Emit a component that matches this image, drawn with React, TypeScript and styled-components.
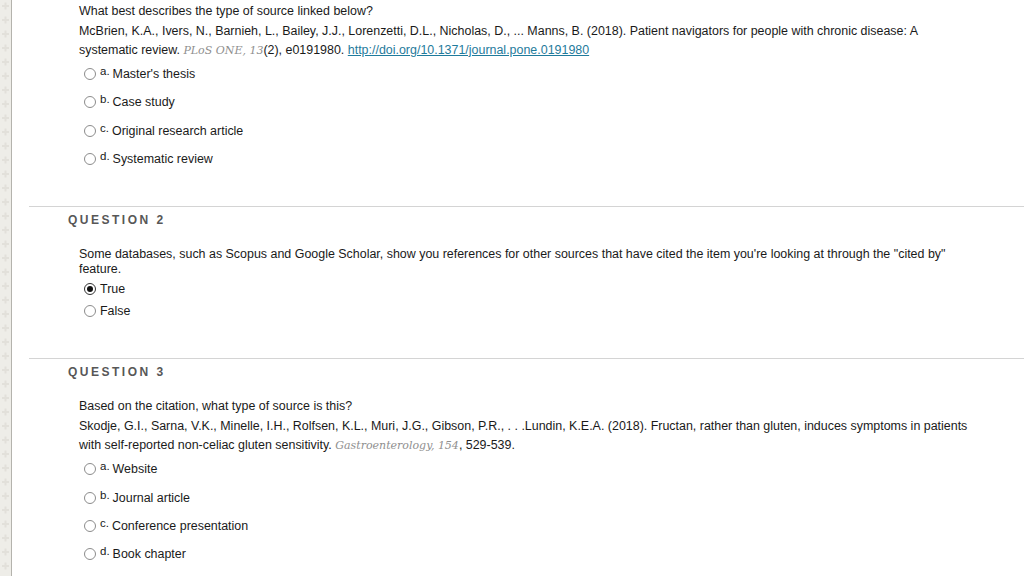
import React from "react";
import styled, { createGlobalStyle } from "styled-components";

const GlobalStyle = createGlobalStyle`
  html, body {
    margin: 0;
    padding: 0;
    background: #ffffff;
  }
  body {
    font-family: "Liberation Sans", Arial, sans-serif;
    font-size: 12.45px;
    color: #1a1a1a;
  }
`;

interface Option {
  letter?: string;
  label: string;
  checked?: boolean;
}

interface QuestionData {
  heading?: string;
  prompt: React.ReactNode;
  citation?: React.ReactNode;
  options: Option[];
  compact?: boolean;
  bottom: number;
}

const Page = styled.div`
  display: flex;
  width: 1024px;
  height: 576px;
  overflow: hidden;
`;

const Sidebar = styled.div`
  flex: 0 0 11px;
  background: #eeede8;
  border-right: 1px solid #b4b3ad;
  overflow: hidden;
`;

const Main = styled.main`
  flex: 1;
  min-width: 0;
`;

const Section = styled.section`
  margin-left: 17px;
`;

const Header = styled.div`
  border-top: 1px solid #d4d4d4;
  padding: 6px 0 0 39px;
`;

const Heading = styled.h2`
  margin: 0;
  font-size: 12px;
  line-height: 15px;
  font-weight: bold;
  letter-spacing: 2.5px;
  color: #575757;
`;

const Body = styled.div<{ $top: number; $bottom: number }>`
  padding: ${(p) => p.$top}px 0 ${(p) => p.$bottom}px 50px;
`;

const Prompt = styled.p`
  margin: 0;
  line-height: 15px;
`;

const Citation = styled.p`
  margin: 3px 0 0;
  line-height: 19px;
`;

const Journal = styled.i`
  font-family: "DejaVu Serif", Georgia, serif;
  font-size: 11px;
  color: #8f8f8f;
`;

const Link = styled.a`
  color: #1f7b9c;
  text-decoration: underline;
`;

const OptionList = styled.div<{ $compact?: boolean }>`
  margin-top: 0.5px;
  display: flex;
  flex-direction: column;
`;

const OptionRow = styled.label<{ $compact?: boolean }>`
  display: flex;
  align-items: center;
  height: ${(p) => (p.$compact ? 22 : 28.33)}px;
  padding-left: 5px;
`;

const Radio = styled.span<{ $checked?: boolean }>`
  box-sizing: border-box;
  width: 12px;
  height: 12px;
  border-radius: 50%;
  border: 1px solid ${(p) => (p.$checked ? "#333333" : "#8c8c8c")};
  background: #ffffff;
  display: flex;
  align-items: center;
  justify-content: center;
  margin-right: 4px;

  &::after {
    content: "";
    width: 6px;
    height: 6px;
    border-radius: 50%;
    background: ${(p) => (p.$checked ? "#111111" : "transparent")};
  }
`;

const Letter = styled.span`
  font-size: 11.5px;
  position: relative;
  top: -3px;
  margin-right: 3px;
`;

const questions: QuestionData[] = [
  {
    prompt: "What best describes the type of source linked below?",
    citation: (
      <>
        McBrien, K.A., Ivers, N., Barnieh, L., Bailey, J.J., Lorenzetti, D.L., Nicholas, D., ... Manns, B. (2018). Patient navigators for people with chronic disease: A
        <br />
        systematic review. <Journal>PLoS ONE, 13</Journal>(2), e0191980.{" "}
        <Link href="#">http://doi.org/10.1371/journal.pone.0191980</Link>
      </>
    ),
    options: [
      { letter: "a.", label: "Master's thesis" },
      { letter: "b.", label: "Case study" },
      { letter: "c.", label: "Original research article" },
      { letter: "d.", label: "Systematic review" },
    ],
    bottom: 33,
  },
  {
    heading: "QUESTION 2",
    prompt: (
      <>
        Some databases, such as Scopus and Google Scholar, show you references for other sources that have cited the item you're looking at through the "cited by"
        <br />
        feature.
      </>
    ),
    options: [{ label: "True", checked: true }, { label: "False" }],
    compact: true,
    bottom: 36,
  },
  {
    heading: "QUESTION 3",
    prompt: "Based on the citation, what type of source is this?",
    citation: (
      <>
        Skodje, G.I., Sarna, V.K., Minelle, I.H., Rolfsen, K.L., Muri, J.G., Gibson, P.R., . . .Lundin, K.E.A. (2018). Fructan, rather than gluten, induces symptoms in patients
        <br />
        with self-reported non-celiac gluten sensitivity. <Journal>Gastroenterology, 154</Journal>, 529-539.
      </>
    ),
    options: [
      { letter: "a.", label: "Website" },
      { letter: "b.", label: "Journal article" },
      { letter: "c.", label: "Conference presentation" },
      { letter: "d.", label: "Book chapter" },
    ],
    bottom: 30,
  },
];

function SidebarPattern() {
  return (
    <svg width="11" height="576" aria-hidden="true">
      <defs>
        <pattern id="plus" width="11" height="14" patternUnits="userSpaceOnUse" y="-1">
          <path d="M2 7h7M5.5 3.5v7" stroke="#e2e0da" strokeWidth="2" />
        </pattern>
      </defs>
      <rect width="11" height="576" fill="url(#plus)" />
    </svg>
  );
}

function Question({ q }: { q: QuestionData }) {
  return (
    <Section>
      {q.heading && (
        <Header>
          <Heading>{q.heading}</Heading>
        </Header>
      )}
      <Body $top={q.heading ? 19 : 3.5} $bottom={q.bottom}>
        <Prompt>{q.prompt}</Prompt>
        {q.citation && <Citation>{q.citation}</Citation>}
        <OptionList>
          {q.options.map((o) => (
            <OptionRow key={o.label} $compact={q.compact}>
              <Radio $checked={o.checked} />
              {o.letter && <Letter>{o.letter}</Letter>}
              <span>{o.label}</span>
            </OptionRow>
          ))}
        </OptionList>
      </Body>
    </Section>
  );
}

export default function App() {
  return (
    <Page>
      <GlobalStyle />
      <Sidebar>
        <SidebarPattern />
      </Sidebar>
      <Main>
        {questions.map((q, i) => (
          <Question key={i} q={q} />
        ))}
      </Main>
    </Page>
  );
}
